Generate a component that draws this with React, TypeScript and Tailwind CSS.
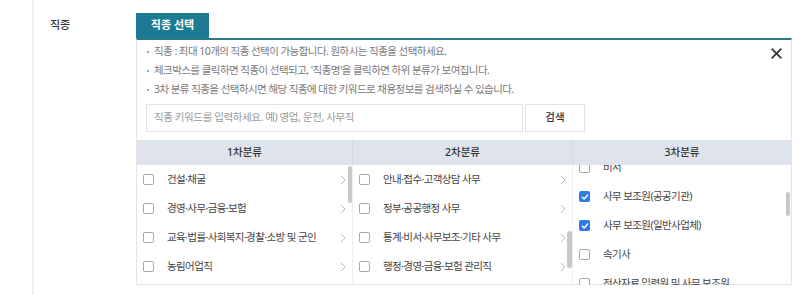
import React from "react";

const col1 = ["건설·채굴", "경영·사무·금융·보험", "교육·법률·사회복지·경찰·소방 및 군인", "농림어업직"];
const col2 = ["안내·접수·고객상담 사무", "정부·공공행정 사무", "통계·비서·사무보조·기타 사무", "행정·경영·금융·보험 관리직"];
const col3 = [
  { name: "비서", checked: false },
  { name: "사무 보조원(공공기관)", checked: true },
  { name: "사무 보조원(일반사업체)", checked: true },
  { name: "속기사", checked: false },
  { name: "전산자료 입력원 및 사무 보조원", checked: false },
];

function Box({ checked }: { checked?: boolean }) {
  if (checked) {
    return (
      <span className="flex h-[11px] w-[11px] shrink-0 items-center justify-center rounded-[2px] bg-[#2f7be5]">
        <svg width="8" height="8" viewBox="0 0 10 10" fill="none">
          <path d="M1.8 5.2 4 7.4 8.3 2.6" stroke="#fff" strokeWidth="1.8" strokeLinecap="round" strokeLinejoin="round" />
        </svg>
      </span>
    );
  }
  return <span className="h-[11px] w-[11px] shrink-0 rounded-[2px] border border-[#a9a9a9] bg-white" />;
}

function Chevron() {
  return (
    <svg width="6" height="10" viewBox="0 0 6 10" fill="none" className="shrink-0">
      <path d="M1 1l4 4-4 4" stroke="#bcbcbc" strokeWidth="1" />
    </svg>
  );
}

function Row({ label, checked, chevron }: { label: string; checked?: boolean; chevron?: boolean }) {
  return (
    <div className="flex h-[29px] items-center pl-[6px] pr-[6px]">
      <Box checked={checked} />
      <span className="ml-[13px] flex-1 truncate text-[10.5px] tracking-[-0.6px] text-[#444]">{label}</span>
      {chevron && <Chevron />}
    </div>
  );
}

export default function App() {
  return (
    <div
      className="flex h-[295px] w-[800px] overflow-hidden bg-white"
      style={{ fontFamily: '"Noto Sans", "Noto Sans CJK KR", sans-serif' }}
    >
      <div className="w-[32px] shrink-0" />
      <div className="w-[2px] shrink-0 bg-[#eef0f4]" />
      <div className="w-[102px] shrink-0 pl-[16px] pt-[17px] text-[11px] font-medium text-[#333]">직종</div>
      <div className="w-[656px] shrink-0 pt-[13px]">
        <div className="flex">
          <div className="flex h-[25px] w-[73px] items-center justify-center bg-[#1d7a93] text-[11px] font-bold text-white">
            직종 선택
          </div>
        </div>
        <div className="relative h-[247px] border-x border-b border-t-2 border-x-[#e4e4e4] border-b-[#e4e4e4] border-t-[#2a7a8c]">
          <svg width="13" height="13" viewBox="0 0 12 12" className="absolute right-[8px] top-[7px]">
            <path d="M1.5 1.5l9 9M10.5 1.5l-9 9" stroke="#333" strokeWidth="1.6" />
          </svg>
          <ul className="pl-[10px] pt-[2px] text-[10.5px] tracking-[-0.55px] text-[#7a7a7a]">
            {[
              "직종 : 최대 10개의 직종 선택이 가능합니다. 원하시는 직종을 선택하세요.",
              "체크박스를 클릭하면 직종이 선택되고, '직종명'을 클릭하면 하위 분류가 보여집니다.",
              "3차 분류 직종을 선택하시면 해당 직종에 대한 키워드로 채용정보를 검색하실 수 있습니다.",
            ].map((t) => (
              <li key={t} className="flex h-[19px] items-center">
                <span className="mr-[5px] h-[2px] w-[2px] rounded-full bg-[#4a9bb0]" />
                {t}
              </li>
            ))}
          </ul>
          <div className="ml-[9px] mt-[5px] flex gap-[2px]">
            <div className="flex h-[28px] w-[377px] items-center border border-[#e2e2e2] px-[7px] text-[10.5px] tracking-[-0.4px] text-[#999]">
              직종 키워드를 입력하세요. 예) 영업, 운전, 사무직
            </div>
            <div className="flex h-[28px] w-[60px] items-center justify-center border border-[#e2e2e2] text-[10.5px] font-medium text-[#333]">
              검색
            </div>
          </div>
          <div className="mt-[8px] grid grid-cols-[216px_220px_1fr]">
            <div className="flex h-[25px] items-center justify-center border-r border-[#d3d8e2] bg-[#dfe3ec] text-[10.5px] font-medium text-[#333]">
              1차분류
            </div>
            <div className="flex h-[25px] items-center justify-center border-r border-[#d3d8e2] bg-[#dfe3ec] text-[10.5px] font-medium text-[#333]">
              2차분류
            </div>
            <div className="flex h-[25px] items-center justify-center bg-[#dfe3ec] text-[10.5px] font-medium text-[#333]">
              3차분류
            </div>

            <div className="relative h-[120px] overflow-hidden border-r border-[#eeeeee]">
              {col1.map((l) => (
                <Row key={l} label={l} chevron />
              ))}
              <span className="absolute right-[0px] top-[1px] h-[37px] w-[4px] rounded-full bg-[#c9c9c9]" />
            </div>
            <div className="relative h-[120px] overflow-hidden border-r border-[#eeeeee]">
              {col2.map((l) => (
                <Row key={l} label={l} chevron />
              ))}
              <span className="absolute right-[0px] top-[66px] h-[37px] w-[5px] rounded-full bg-[#c9c9c9]" />
            </div>
            <div className="relative h-[120px] overflow-hidden">
              <div className="mt-[-12px]">
                {col3.map((r) => (
                  <Row key={r.name} label={r.name} checked={r.checked} />
                ))}
              </div>
              <span className="absolute right-[1px] top-[27px] h-[24px] w-[4px] rounded-full bg-[#c9c9c9]" />
            </div>
          </div>
        </div>
      </div>
    </div>
  );
}
